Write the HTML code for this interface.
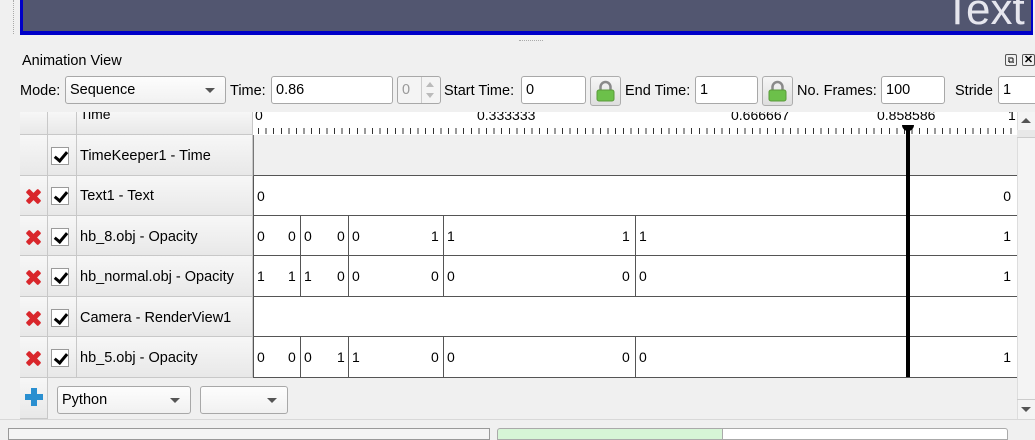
<!DOCTYPE html>
<html><head><meta charset="utf-8"><style>
*{box-sizing:border-box;margin:0;padding:0}
body{width:1035px;height:436px;overflow:hidden;background:#f0f0f0;font-family:"Liberation Sans",sans-serif;font-size:14px;color:#000;position:relative}
.a{position:absolute}
.inp{position:absolute;background:#fff;border:1px solid #a8a8a8;border-radius:3px;height:28px;padding-left:4px;line-height:26px;font-size:14.5px}
.lbl{position:absolute;line-height:20px;font-size:14.5px}
.lock{position:absolute;width:31px;height:30px;border:1px solid #adadad;border-radius:3px;background:linear-gradient(#f6f6f6,#dedede)}
.hc{position:absolute;background:linear-gradient(#f7f7f7,#e8e8e8);border-right:1px solid #c8c8c8;border-bottom:1px solid #c8c8c8}
.cb{position:absolute;left:51px;width:18px;height:18px;background:#fff;border:1px solid #9a9a9a}
.cb:after{content:"";position:absolute;left:5px;top:1px;width:5px;height:10px;border:solid #000;border-width:0 3px 3px 0;transform:rotate(40deg)}
.x{position:absolute;left:26px;width:15px;height:15px}
.x:before,.x:after{content:"";position:absolute;left:5px;top:-1px;width:5px;height:17px;background:#d9262b;border-radius:1px}
.x:before{transform:rotate(45deg)}.x:after{transform:rotate(-45deg)}
.tl{position:absolute;left:80px;font-size:14.5px;line-height:20px}
.row{position:absolute;left:253px;width:764px;background:#fff;border-bottom:1px solid #555}
.v{position:absolute;top:10px;font-size:14px;line-height:20px}
.d{position:absolute;top:0;bottom:0;width:1px;background:#555}
</style></head><body>
<div class="a" style="left:13px;top:0;height:34px;border-left:1px dotted #aaa"></div>
<div class="a" style="left:20px;top:0;width:1013px;height:35px;background:#0000c8"></div>
<div class="a" style="left:23px;top:0;width:1008px;height:31px;background:#525670"></div>
<div class="a" style="left:944px;top:-20px;color:#e6e6ee;font-size:44px;line-height:60px;font-weight:300">Text</div>
<div class="a" style="left:519px;top:40px;width:24px;border-top:1px dotted #aaa"></div>
<div class="lbl" style="left:22px;top:51px">Animation View</div>
<div class="a" style="left:1005px;top:54px;width:12px;height:12px;border:1px solid #555;border-radius:2px;font-size:9px;line-height:10px;text-align:center">⧉</div>
<div class="a" style="left:1022px;top:54px;width:13px;height:12px;border:1px solid #555;border-radius:2px;font-size:11px;line-height:10px;text-align:center;font-weight:bold">✕</div>

<div class="lbl" style="left:20px;top:81px">Mode:</div>
<div class="inp" style="left:65px;top:76px;width:161px;background:linear-gradient(#fdfdfd,#f1f1f1)">Sequence</div>
<div class="a" style="left:205px;top:88px;border:5px solid transparent;border-top:5px solid #555;border-bottom:0"></div>
<div class="lbl" style="left:230px;top:81px">Time:</div>
<div class="inp" style="left:271px;top:76px;width:122px">0.86</div>
<div class="inp" style="left:397px;top:76px;width:44px;color:#999;background:#f4f4f4">0</div>
<div class="a" style="left:421px;top:77px;width:1px;height:26px;background:#ccc"></div>
<div class="a" style="left:426px;top:82px;border:4px solid transparent;border-bottom:5px solid #bbb;border-top:0"></div>
<div class="a" style="left:426px;top:93px;border:4px solid transparent;border-top:5px solid #bbb;border-bottom:0"></div>
<div class="lbl" style="left:444px;top:81px">Start Time:</div>
<div class="inp" style="left:521px;top:76px;width:65px">0</div>
<div class="lock" style="left:590px;top:76px"><svg width="29" height="28"><path d="M9.5 14V10a5 5 0 0 1 10 0v4" fill="none" stroke="#8a8a8a" stroke-width="2.5"/><rect x="6" y="13" width="17" height="11" rx="2" fill="#6cc04a" stroke="#5a9a3a"/></svg></div>
<div class="lbl" style="left:625px;top:81px">End Time:</div>
<div class="inp" style="left:695px;top:76px;width:63px">1</div>
<div class="lock" style="left:762px;top:76px"><svg width="29" height="28"><path d="M9.5 14V10a5 5 0 0 1 10 0v4" fill="none" stroke="#8a8a8a" stroke-width="2.5"/><rect x="6" y="13" width="17" height="11" rx="2" fill="#6cc04a" stroke="#5a9a3a"/></svg></div>
<div class="lbl" style="left:797px;top:81px">No. Frames:</div>
<div class="inp" style="left:881px;top:76px;width:64px">100</div>
<div class="lbl" style="left:955px;top:81px">Stride</div>
<div class="inp" style="left:998px;top:76px;width:45px">1</div>

<div class="hc" style="left:20px;top:112px;width:28px;height:23px"></div>
<div class="hc" style="left:48px;top:112px;width:29px;height:23px"></div>
<div class="hc" style="left:77px;top:112px;width:176px;height:23px;overflow:hidden"><div style="position:absolute;left:3px;top:-6px;font-size:14px">Time</div></div>
<div class="a" style="left:253px;top:112px;width:764px;height:23px;background:#fff;overflow:hidden">
<div class="a" style="left:2px;top:-5px">0</div>
<div class="a" style="left:224px;top:-5px">0.333333</div>
<div class="a" style="left:478px;top:-5px">0.666667</div>
<div class="a" style="left:624px;top:-5px">0.858586</div>
<div class="a" style="left:755px;top:-5px">1</div>
<div class="a" style="left:5px;top:16px;width:755px;height:6px;background:repeating-linear-gradient(90deg,#333 0 1px,transparent 1px 7.6px)"></div>
</div>
<div class="hc" style="left:20px;top:135px;width:28px;height:41px"></div>
<div class="hc" style="left:48px;top:135px;width:29px;height:41px"></div>
<div class="hc" style="left:77px;top:135px;width:176px;height:41px"></div>
<div class="cb" style="top:147px"></div>
<div class="tl" style="top:146px">TimeKeeper1 - Time</div>
<div class="a" style="left:253px;top:135px;width:764px;height:41px;background:#f0f0f0;border-left:1px solid #777;border-bottom:1px solid #555"></div>

<div class="hc" style="left:20px;top:176px;width:28px;height:40px"></div><div class="hc" style="left:48px;top:176px;width:29px;height:40px"></div><div class="hc" style="left:77px;top:176px;width:176px;height:40px"></div>
<div class="x" style="top:189px"></div><div class="cb" style="top:187px"></div><div class="tl" style="top:186px">Text1 - Text</div>
<div class="row" style="top:176px;height:40px"><div class="v" style="left:4px">0</div><div class="v" style="right:6px">0</div></div>

<div class="hc" style="left:20px;top:216px;width:28px;height:40px"></div><div class="hc" style="left:48px;top:216px;width:29px;height:40px"></div><div class="hc" style="left:77px;top:216px;width:176px;height:40px"></div>
<div class="x" style="top:230px"></div><div class="cb" style="top:228px"></div><div class="tl" style="top:227px">hb_8.obj - Opacity</div>
<div class="row" style="top:216px;height:40px"><div class="d" style="left:47px"></div><div class="d" style="left:95px"></div><div class="d" style="left:190px"></div><div class="d" style="left:382px"></div>
<div class="v" style="left:4px">0</div><div class="v" style="left:35px">0</div><div class="v" style="left:51px">0</div><div class="v" style="left:84px">0</div><div class="v" style="left:99px">0</div><div class="v" style="left:178px">1</div><div class="v" style="left:194px">1</div><div class="v" style="left:369px">1</div><div class="v" style="left:386px">1</div><div class="v" style="right:6px">1</div></div>

<div class="hc" style="left:20px;top:256px;width:28px;height:41px"></div><div class="hc" style="left:48px;top:256px;width:29px;height:41px"></div><div class="hc" style="left:77px;top:256px;width:176px;height:41px"></div>
<div class="x" style="top:270px"></div><div class="cb" style="top:268px"></div><div class="tl" style="top:267px">hb_normal.obj - Opacity</div>
<div class="row" style="top:256px;height:41px"><div class="d" style="left:47px"></div><div class="d" style="left:95px"></div><div class="d" style="left:190px"></div><div class="d" style="left:382px"></div>
<div class="v" style="left:4px">1</div><div class="v" style="left:35px">1</div><div class="v" style="left:51px">1</div><div class="v" style="left:84px">0</div><div class="v" style="left:99px">0</div><div class="v" style="left:178px">0</div><div class="v" style="left:194px">0</div><div class="v" style="left:369px">0</div><div class="v" style="left:386px">0</div><div class="v" style="right:6px">1</div></div>

<div class="hc" style="left:20px;top:297px;width:28px;height:40px"></div><div class="hc" style="left:48px;top:297px;width:29px;height:40px"></div><div class="hc" style="left:77px;top:297px;width:176px;height:40px"></div>
<div class="x" style="top:311px"></div><div class="cb" style="top:309px"></div><div class="tl" style="top:308px">Camera - RenderView1</div>
<div class="row" style="top:297px;height:40px"></div>

<div class="hc" style="left:20px;top:337px;width:28px;height:41px"></div><div class="hc" style="left:48px;top:337px;width:29px;height:41px"></div><div class="hc" style="left:77px;top:337px;width:176px;height:41px"></div>
<div class="x" style="top:351px"></div><div class="cb" style="top:349px"></div><div class="tl" style="top:348px">hb_5.obj - Opacity</div>
<div class="row" style="top:337px;height:41px"><div class="d" style="left:47px"></div><div class="d" style="left:95px"></div><div class="d" style="left:190px"></div><div class="d" style="left:382px"></div>
<div class="v" style="left:4px">0</div><div class="v" style="left:35px">0</div><div class="v" style="left:51px">0</div><div class="v" style="left:84px">1</div><div class="v" style="left:99px">1</div><div class="v" style="left:178px">0</div><div class="v" style="left:194px">0</div><div class="v" style="left:369px">0</div><div class="v" style="left:386px">0</div><div class="v" style="right:6px">1</div></div>
<div class="a" style="left:253px;top:176px;width:1px;height:202px;background:#555"></div>

<div class="a" style="left:906px;top:129px;width:4px;height:248px;background:#000"></div>
<div class="a" style="left:902px;top:125px;width:12px;height:6px;background:#000;border-radius:0 0 6px 6px"></div>

<div class="a" style="left:1017px;top:112px;width:18px;height:307px;background:#f4f4f4;border-left:1px solid #ddd"></div>
<div class="a" style="left:1021px;top:118px;border:5px solid transparent;border-bottom:5px solid #555;border-top:0"></div>
<div class="a" style="left:1017px;top:130px;width:18px;height:8px;border-bottom:1px solid #ccc;background:#e8e8e8"></div>
<div class="a" style="left:1021px;top:407px;border:5px solid transparent;border-top:5px solid #555;border-bottom:0"></div>
<div class="a" style="left:1017px;top:399px;width:18px;border-top:1px solid #ccc"></div>

<div class="hc" style="left:20px;top:378px;width:28px;height:41px"></div>
<div class="a" style="left:25px;top:394px;width:18px;height:6px;background:#2a8fd0"></div>
<div class="a" style="left:31px;top:388px;width:6px;height:18px;background:#2a8fd0"></div>
<div class="inp" style="left:57px;top:386px;width:134px;background:linear-gradient(#fdfdfd,#f1f1f1)">Python</div>
<div class="a" style="left:170px;top:398px;border:5px solid transparent;border-top:5px solid #555;border-bottom:0"></div>
<div class="inp" style="left:200px;top:386px;width:88px;background:linear-gradient(#fdfdfd,#f1f1f1)"></div>
<div class="a" style="left:267px;top:398px;border:5px solid transparent;border-top:5px solid #555;border-bottom:0"></div>
<div class="a" style="left:0;top:419px;width:1035px;border-top:1px solid #d8d8d8"></div>
<div class="a" style="left:8px;top:428px;width:482px;height:12px;background:#f4f4f4;border:1px solid #999"></div>
<div class="a" style="left:497px;top:428px;width:226px;height:12px;background:#d6f5d6;border:1px solid #aaa;border-radius:3px 0 0 0"></div>
<div class="a" style="left:722px;top:428px;width:286px;height:12px;background:#fff;border:1px solid #aaa;border-radius:0 3px 0 0"></div>
</body></html>
